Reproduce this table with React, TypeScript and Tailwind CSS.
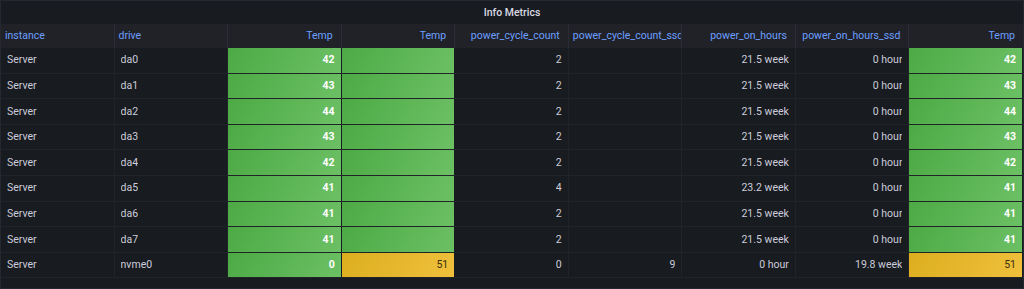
import React from 'react';

type Row = {
    drive: string;
    t1: string;
    t2: string;
    pcc: string;
    pccSsd: string;
    poh: string;
    pohSsd: string;
    t3: string;
};

const rows: Row[] = [
    { drive: 'da0', t1: '42', t2: '', pcc: '2', pccSsd: '', poh: '21.5 week', pohSsd: '0 hour', t3: '42' },
    { drive: 'da1', t1: '43', t2: '', pcc: '2', pccSsd: '', poh: '21.5 week', pohSsd: '0 hour', t3: '43' },
    { drive: 'da2', t1: '44', t2: '', pcc: '2', pccSsd: '', poh: '21.5 week', pohSsd: '0 hour', t3: '44' },
    { drive: 'da3', t1: '43', t2: '', pcc: '2', pccSsd: '', poh: '21.5 week', pohSsd: '0 hour', t3: '43' },
    { drive: 'da4', t1: '42', t2: '', pcc: '2', pccSsd: '', poh: '21.5 week', pohSsd: '0 hour', t3: '42' },
    { drive: 'da5', t1: '41', t2: '', pcc: '4', pccSsd: '', poh: '23.2 week', pohSsd: '0 hour', t3: '41' },
    { drive: 'da6', t1: '41', t2: '', pcc: '2', pccSsd: '', poh: '21.5 week', pohSsd: '0 hour', t3: '41' },
    { drive: 'da7', t1: '41', t2: '', pcc: '2', pccSsd: '', poh: '21.5 week', pohSsd: '0 hour', t3: '41' },
    { drive: 'nvme0', t1: '0', t2: '51', pcc: '0', pccSsd: '9', poh: '0 hour', pohSsd: '19.8 week', t3: '51' },
];

const headers = [
    { name: 'instance', right: false },
    { name: 'drive', right: false },
    { name: 'Temp', right: true },
    { name: 'Temp', right: true },
    { name: 'power_cycle_count', right: true },
    { name: 'power_cycle_count_ssd', right: true },
    { name: 'power_on_hours', right: true },
    { name: 'power_on_hours_ssd', right: true },
    { name: 'Temp', right: true },
];

function PlainCell({ value, right }: { value: string; right?: boolean }) {
    return (
        <div
            className={`flex items-center px-[6px] border-r border-[#202328] last:border-r-0 ${right ? 'justify-end' : 'justify-start'}`}
        >
            <span className="truncate">{value}</span>
        </div>
    );
}

function TempCell({ value, warm }: { value: string; warm?: boolean }) {
    return (
        <div className="flex border-r border-[#181b1f]">
            <div
                className={`flex flex-1 items-center justify-end px-[6px] ${warm
                    ? 'bg-[linear-gradient(120deg,#dcae1f,#f0c03c)] text-[#3a3010]'
                    : 'bg-[linear-gradient(120deg,#4caa45,#6cc064)] text-white font-bold'
                    }`}
            >
                {value}
            </div>
        </div>
    );
}

export default function App() {
    return (
        <div
            className="w-[1024px] h-[289px] bg-[#181b1f] border border-[#25282e] text-[#ccccdc] text-[10.5px] overflow-hidden"
            style={{ fontFamily: 'Roboto, "Liberation Sans", sans-serif' }}
        >
            <div className="h-[23px] flex items-center justify-center font-medium text-[10.5px] text-[#d8d9e2]">
                Info Metrics
            </div>

            <div className="grid grid-cols-9 h-[24px] bg-[#202228] text-[#6e9fff]">
                {headers.map((h, i) => (
                    <div
                        key={i}
                        className={`overflow-hidden whitespace-nowrap pl-[4px] pr-[8px] leading-[24px] border-r border-[#2a2d33] last:border-r-0 ${h.right ? 'text-right' : 'text-left'}`}
                    >
                        {h.name}
                    </div>
                ))}
            </div>

            <div className="flex flex-col">
                {rows.map((r) => (
                    <div key={r.drive} className="grid grid-cols-9 h-[25.6px] border-b border-[#202328]">
                        <PlainCell value="Server" />
                        <PlainCell value={r.drive} />
                        <TempCell value={r.t1} />
                        {r.t2 ? <TempCell value={r.t2} warm /> : <TempCell value="" />}
                        <PlainCell value={r.pcc} right />
                        <PlainCell value={r.pccSsd} right />
                        <PlainCell value={r.poh} right />
                        <PlainCell value={r.pohSsd} right />
                        <TempCell value={r.t3} warm={r.t3 === '51'} />
                    </div>
                ))}
            </div>
        </div>
    );
}
